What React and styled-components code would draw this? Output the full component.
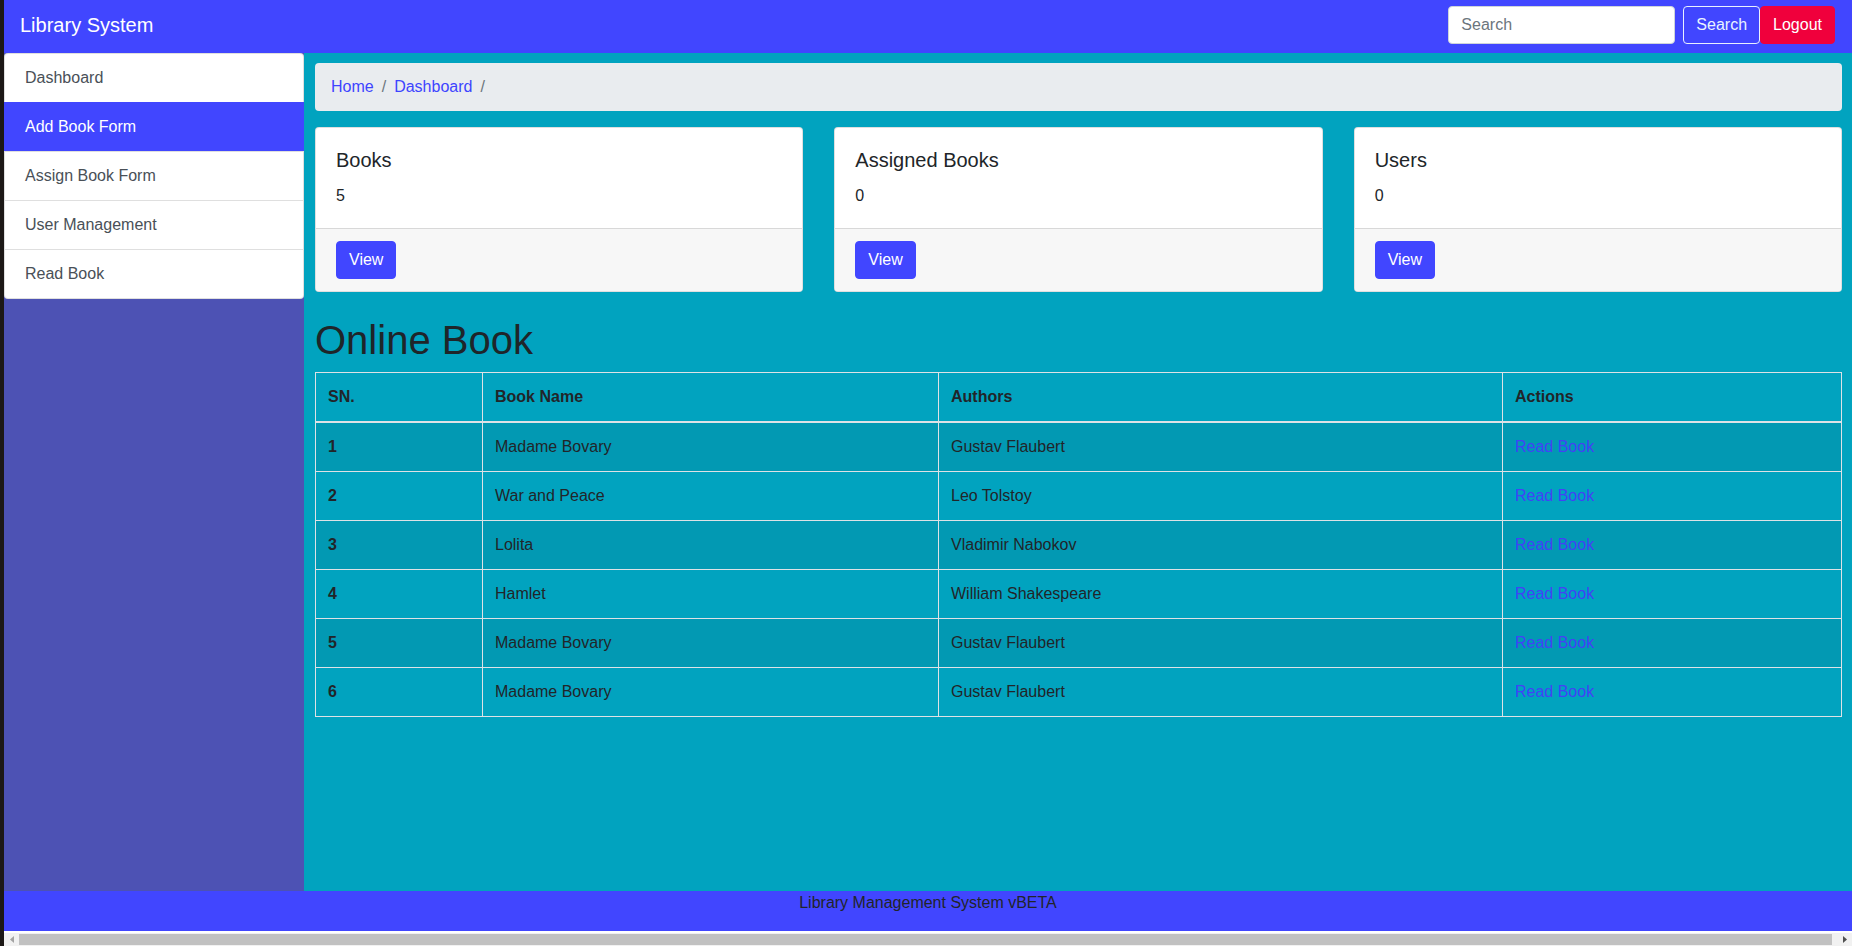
import React from "react"
import styled, { createGlobalStyle } from "styled-components"

const GlobalStyle = createGlobalStyle`
  html, body {
    margin: 0;
    padding: 0;
    background: #1c1816;
    overflow: hidden;
  }
  body {
    font-family: "Liberation Sans", Arial, Helvetica, sans-serif;
    font-size: 16px;
    line-height: 1.5;
    color: #212529;
  }
  * { box-sizing: border-box; }
`;

const Page = styled("div")`
  margin-left: 4px;
  height: 946px;
  display: flex;
  flex-direction: column;
`;

const Navbar = styled("nav")`
  height: 53px;
  flex-shrink: 0;
  background-color: #4146ff;
  display: flex;
  align-items: center;
  justify-content: space-between;
  padding: 0 17px 4px 16px;
`;

const Brand = styled("a")`
  color: #fff;
  font-size: 20px;
  line-height: 30px;
  text-decoration: none;
`;

const NavForm = styled("form")`
  display: flex;
  align-items: center;
`;

const SearchInput = styled("input")`
  width: 227px;
  height: 38px;
  padding: 6px 12px;
  font-family: inherit;
  font-size: 16px;
  color: #495057;
  background: #fff;
  border: 1px solid #ced4da;
  border-radius: 4px;
  margin-right: 8px;
  &::placeholder { color: #6c757d; }
`;

const Button = styled("button")`
  height: 38px;
  padding: 6px 12px;
  font-family: inherit;
  font-size: 16px;
  line-height: 24px;
  border-radius: 4px;
  cursor: pointer;
  color: ${p => (p.$outline ? "#e8f4ff" : "#fff")};
  background-color: ${p => p.$bg || "transparent"};
  border: 1px solid ${p => (p.$outline ? "#e8f0ff" : p.$bg)};
`;

const Body = styled("div")`
  flex: 1;
  display: flex;
  min-height: 0;
`;

const Sidebar = styled("aside")`
  width: 300px;
  flex-shrink: 0;
  background-color: #4d52b4;
`;

const ListGroup = styled("ul")`
  list-style: none;
  margin: 0;
  padding: 0;
`;

const ListItem = styled("li")`
  padding: 12px 20px;
  line-height: 24px;
  border: 1px solid ${p => (p.$active ? "#4146ff" : "rgba(0,0,0,0.125)")};
  margin-top: -1px;
  background-color: ${p => (p.$active ? "#4146ff" : "#fff")};
  color: ${p => (p.$active ? "#fff" : "#495057")};
  &:first-child { margin-top: 0; border-radius: 4px 4px 0 0; }
  &:last-child { border-radius: 0 0 4px 4px; }
`;

const Main = styled("main")`
  flex: 1;
  background-color: #01a3bf;
  padding: 10px 10px 0 11px;
`;

const Breadcrumb = styled("ol")`
  display: flex;
  list-style: none;
  margin: 0 0 16px;
  padding: 12px 16px;
  line-height: 24px;
  background-color: #e9ecef;
  border-radius: 4px;
`;

const Crumb = styled("li")`
  color: #6c757d;
  & + &::before {
    content: "/";
    padding: 0 8px;
    color: #6c757d;
  }
`;

const Link = styled("a")`
  color: #3d44ff;
  text-decoration: none;
`;

const CardGrid = styled("div")`
  display: grid;
  grid-template-columns: repeat(3, 1fr);
  gap: 31px;
`;

const Card = styled("div")`
  background: #fff;
  border: 1px solid rgba(0,0,0,0.125);
  border-radius: 4px;
  overflow: hidden;
`;

const CardBody = styled("div")`
  padding: 20px;
`;

const CardTitle = styled("h5")`
  margin: 0 0 12px;
  font-size: 20px;
  font-weight: 500;
  line-height: 1.2;
`;

const CardText = styled("p")`
  margin: 0;
`;

const CardFooter = styled("div")`
  padding: 12px 20px;
  background-color: #f7f7f7;
  border-top: 1px solid rgba(0,0,0,0.125);
`;

const Heading = styled("h1")`
  margin: 24px 0 8px;
  font-size: 40px;
  font-weight: 500;
  line-height: 1.2;
  color: #1f2529;
`;

const Table = styled("table")`
  width: 100%;
  table-layout: fixed;
  border-collapse: collapse;
  color: #212529;
`;

const Th = styled("th")`
  text-align: left;
  padding: 12px;
  line-height: 24px;
  font-weight: bold;
  border: 1px solid #dee2e6;
  border-bottom-width: 2px;
`;

const Row = styled("tr")`
  background-color: ${p => (p.$striped ? "#0299b3" : "transparent")};
`;

const Td = styled("td")`
  padding: 12px;
  line-height: 24px;
  border: 1px solid #dee2e6;
  font-weight: ${p => (p.$bold ? "bold" : "normal")};
`;

const ReadLink = styled("a")`
  color: #4242f6;
  text-decoration: none;
`;

const Footer = styled("footer")`
  height: 40px;
  flex-shrink: 0;
  background-color: #4146ff;
  text-align: center;
  line-height: 24px;
  color: #212529;
`;

const ScrollTrack = styled("div")`
  height: 15px;
  flex-shrink: 0;
  background: #f1f1f1;
  border-top: 2px solid #fff;
  display: flex;
  align-items: center;
`;

const ScrollArrow = styled("div")`
  width: 15px;
  height: 13px;
  display: flex;
  align-items: center;
  justify-content: center;
`;

const ScrollThumb = styled("div")`
  flex: 1;
  height: 11px;
  margin-right: 5px;
  background: #c1c1c1;
`;

const books = [
  ["Madame Bovary", "Gustav Flaubert"],
  ["War and Peace", "Leo Tolstoy"],
  ["Lolita", "Vladimir Nabokov"],
  ["Hamlet", "William Shakespeare"],
  ["Madame Bovary", "Gustav Flaubert"],
  ["Madame Bovary", "Gustav Flaubert"],
];

const stats = [
  ["Books", 5],
  ["Assigned Books", 0],
  ["Users", 0],
];

const menu = ["Dashboard", "Add Book Form", "Assign Book Form", "User Management", "Read Book"];

export default function App() {
  return (
    <>
      <GlobalStyle />
      <Page>
        <Navbar>
          <Brand href="#">Library System</Brand>
          <NavForm onSubmit={e => e.preventDefault()}>
            <SearchInput type="search" placeholder="Search" />
            <Button $outline type="submit">Search</Button>
            <Button $bg="#f0003c" type="button">Logout</Button>
          </NavForm>
        </Navbar>
        <Body>
          <Sidebar>
            <ListGroup>
              {menu.map(m => (
                <ListItem key={m} $active={m === "Add Book Form"}>{m}</ListItem>
              ))}
            </ListGroup>
          </Sidebar>
          <Main>
            <Breadcrumb>
              <Crumb><Link href="#">Home</Link></Crumb>
              <Crumb><Link href="#">Dashboard</Link></Crumb>
              <Crumb />
            </Breadcrumb>
            <CardGrid>
              {stats.map(([title, n]) => (
                <Card key={title}>
                  <CardBody>
                    <CardTitle>{title}</CardTitle>
                    <CardText>{n}</CardText>
                  </CardBody>
                  <CardFooter>
                    <Button $bg="#4146ff" type="button">View</Button>
                  </CardFooter>
                </Card>
              ))}
            </CardGrid>
            <Heading>Online Book</Heading>
            <Table>
              <colgroup>
                <col style={{ width: 167 }} />
                <col style={{ width: 456 }} />
                <col style={{ width: 564 }} />
                <col style={{ width: 339 }} />
              </colgroup>
              <thead>
                <tr>
                  <Th>SN.</Th>
                  <Th>Book Name</Th>
                  <Th>Authors</Th>
                  <Th>Actions</Th>
                </tr>
              </thead>
              <tbody>
                {books.map(([name, author], i) => (
                  <Row key={i} $striped={i % 2 === 0}>
                    <Td $bold>{i + 1}</Td>
                    <Td>{name}</Td>
                    <Td>{author}</Td>
                    <Td><ReadLink href="#">Read Book</ReadLink></Td>
                  </Row>
                ))}
              </tbody>
            </Table>
          </Main>
        </Body>
        <Footer>Library Management System vBETA</Footer>
        <ScrollTrack>
          <ScrollArrow>
            <svg width="4" height="7" viewBox="0 0 4 7"><path d="M4 0 L0 3.5 L4 7 Z" fill="#a3a3a3" /></svg>
          </ScrollArrow>
          <ScrollThumb />
          <ScrollArrow>
            <svg width="4" height="7" viewBox="0 0 4 7"><path d="M0 0 L4 3.5 L0 7 Z" fill="#505050" /></svg>
          </ScrollArrow>
        </ScrollTrack>
      </Page>
    </>
  );
}
